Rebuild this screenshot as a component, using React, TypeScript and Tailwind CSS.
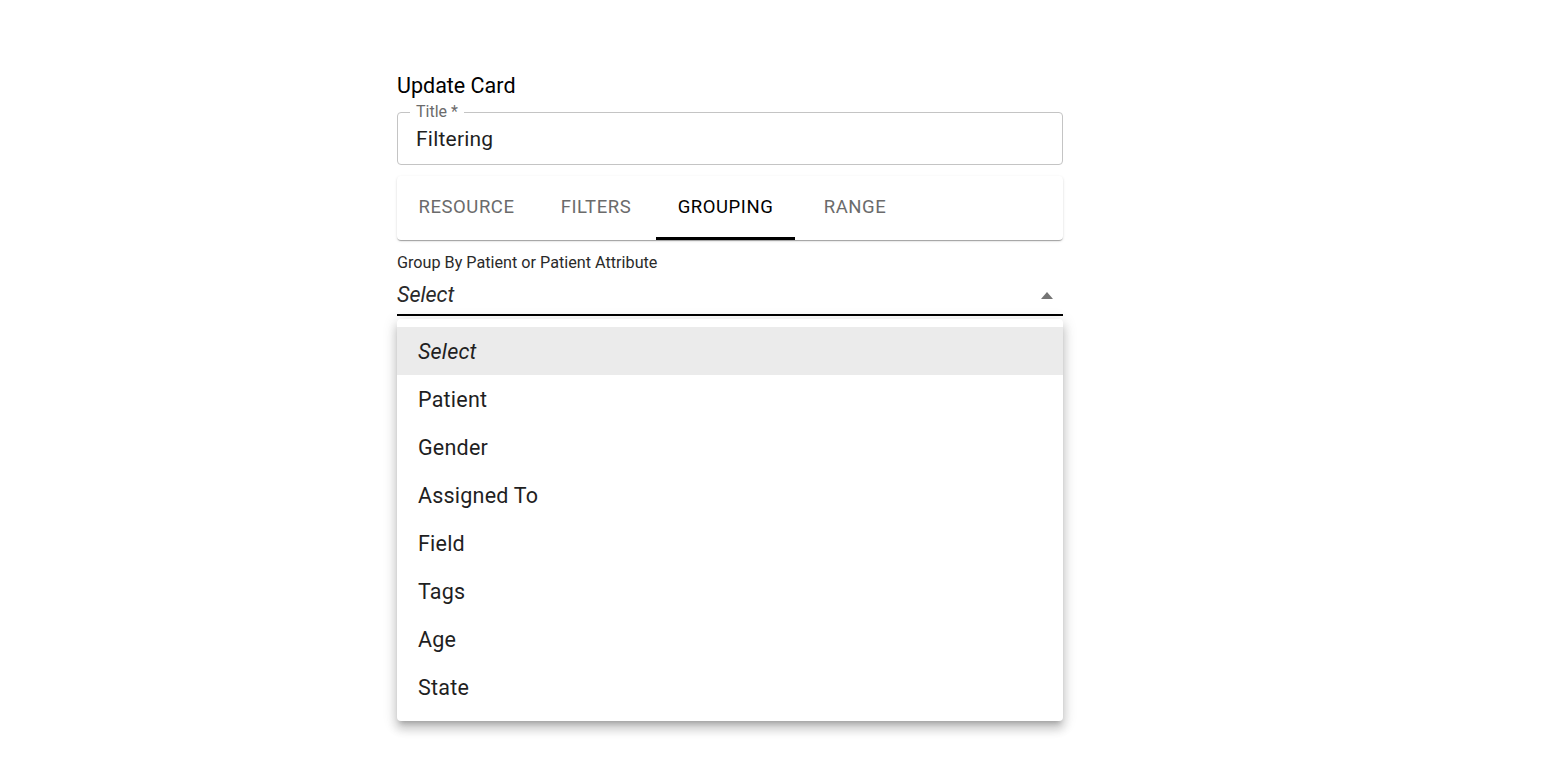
import { useState } from "react";

const TABS = [
  { label: "RESOURCE", w: "w-[139px]" },
  { label: "FILTERS", w: "w-[120px]" },
  { label: "GROUPING", w: "w-[139px]" },
  { label: "RANGE", w: "w-[120px]" },
];

const OPTIONS = ["Select", "Patient", "Gender", "Assigned To", "Field", "Tags", "Age", "State"];

export default function App() {
  const [tab, setTab] = useState(2);
  const [value, setValue] = useState("Select");

  return (
    <div className="min-h-screen bg-white font-['Roboto',sans-serif] text-[#1f1f1f]">
      <div className="ml-[397px] w-[666px] pt-[69px]">
        <h2 className="h-[32px] pt-[1px] text-[21.5px] leading-[32px] text-black">Update Card</h2>

        {/* outlined text field */}
        <div className="relative mt-[11px] h-[53px] rounded-[4px] border border-[#c4c4c4] px-[18px] flex items-center">
          <span className="absolute -top-[9px] left-[12px] bg-white px-[6px] text-[16px] leading-[16px] text-[#6b6b6b]">
            Title *
          </span>
          <span className="mt-[2px] text-[21px] text-[#1f1f1f] tracking-[0.01em]">Filtering</span>
        </div>

        {/* tabs */}
        <div className="mt-[11px] h-[64px] rounded-[4px] bg-white shadow-[0px_2px_1px_-1px_rgba(0,0,0,0.2),0px_1px_1px_0px_rgba(0,0,0,0.14),0px_1px_3px_0px_rgba(0,0,0,0.12)] flex">
          {TABS.map((t, i) => (
            <button
              key={t.label}
              onClick={() => setTab(i)}
              className={`${t.w} relative h-full flex items-center justify-center text-[18.5px] font-normal tracking-[0.03em] ${
                tab === i ? "text-black" : "text-[#6b6b6b]"
              }`}
            >
              <span className="-mt-[1px]">{t.label}</span>
              {tab === i && <span className="absolute bottom-0 left-0 right-0 h-[3px] bg-black" />}
            </button>
          ))}
        </div>

        {/* select */}
        <div className="mt-[13px] text-[16.2px] leading-[20px] text-[#2a2a2a]">Group By Patient or Patient Attribute</div>
        <div className="relative">
          <div className="h-[43px] border-b-2 border-black flex items-center justify-between">
            <span className="mt-[3px] italic text-[21.5px] text-[#2a2a2a]">{value}</span>
            <svg width="12" height="7" viewBox="0 0 12 7" className="mr-[10px] mt-[4px]">
              <path d="M0 7 L6 0 L12 7 Z" fill="#757575" />
            </svg>
          </div>

          <ul className="absolute left-0 right-0 top-[calc(100%+3px)] rounded-[4px] bg-white pt-[8px] pb-[10px] shadow-[0px_5px_5px_-3px_rgba(0,0,0,0.2),0px_8px_10px_1px_rgba(0,0,0,0.14),0px_3px_14px_2px_rgba(0,0,0,0.12)]">
            {OPTIONS.map((o, i) => (
              <li
                key={o}
                onClick={() => setValue(o)}
                className={`h-[48px] px-[21px] pt-[2px] flex items-center text-[21.5px] tracking-[0.01em] text-[#1f1f1f] cursor-pointer ${
                  i === 0 ? "bg-[#ebebeb] italic" : ""
                }`}
              >
                {o}
              </li>
            ))}
          </ul>
        </div>
      </div>
    </div>
  );
}
